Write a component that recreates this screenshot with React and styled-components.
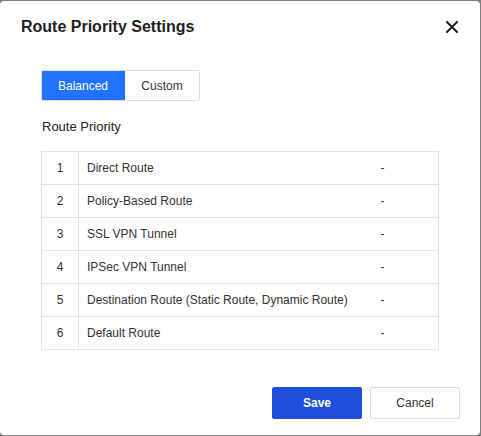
import React, { useState } from "react";
import styled, { createGlobalStyle } from "styled-components";

const GlobalStyle = createGlobalStyle`
  html, body {
    margin: 0;
    padding: 0;
    background: #7f7f7f;
    font-family: "Liberation Sans", Arial, sans-serif;
  }
  * { box-sizing: border-box; }
`;

const Dialog = styled.div`
  margin-top: 1px;
  width: 480px;
  height: 434px;
  background: #fff;
  border-radius: 4px;
  display: flex;
  flex-direction: column;
`;

const Header = styled.div`
  display: flex;
  align-items: center;
  justify-content: space-between;
  padding: 14px 21px 0 21px;
  height: 38px;
`;

const Title = styled.h2`
  margin: 0;
  font-size: 16px;
  line-height: 24px;
  font-weight: 700;
  color: #1f1f1f;
`;

const CloseButton = styled.button`
  border: 0;
  background: none;
  padding: 0;
  width: 14px;
  height: 14px;
  display: flex;
  align-items: center;
  justify-content: center;
  cursor: pointer;
`;

const Body = styled.div`
  padding: 31px 41px 0 41px;
  display: flex;
  flex-direction: column;
  align-items: flex-start;
`;

const Segmented = styled.div`
  display: flex;
  height: 31px;
  border: 1px solid #dcdcdc;
  border-radius: 2px;
  overflow: hidden;
`;

const SegmentButton = styled.button`
  width: ${(p) => p.$width}px;
  border: 0;
  margin: ${(p) => (p.$active ? "-1px 0 -1px -1px" : "0")};
  height: ${(p) => (p.$active ? "31px" : "auto")};
  background: ${(p) => (p.$active ? "#2172ff" : "#fff")};
  color: ${(p) => (p.$active ? "#fff" : "#333")};
  font-family: inherit;
  font-size: 12px;
  cursor: pointer;
`;

const SectionLabel = styled.div`
  margin-top: 17px;
  padding-left: 1px;
  font-size: 13px;
  line-height: 18px;
  color: #222;
`;

const Table = styled.table`
  margin-top: 15px;
  width: 398px;
  border-collapse: collapse;
  border: 1px solid #e3e5ec;
  font-size: 12px;
  color: #333;
`;

const Row = styled.tr`
  height: 33px;
  border-bottom: 1px solid #e3e5ec;
`;

const IndexCell = styled.td`
  width: 37px;
  text-align: center;
  border-right: 1px solid #e3e5ec;
  padding: 0;
`;

const NameCell = styled.td`
  width: 294px;
  padding: 0 8px;
`;

const ValueCell = styled.td`
  padding: 0 8px;
`;

const Footer = styled.div`
  margin-top: auto;
  padding: 0 20px 16px 0;
  display: flex;
  justify-content: flex-end;
  gap: 8px;
`;

const FooterButton = styled.button`
  width: 90px;
  height: 32px;
  border-radius: 2px;
  font-family: inherit;
  font-size: 12px;
  font-weight: ${(p) => (p.$primary ? 700 : 400)};
  border: 1px solid ${(p) => (p.$primary ? "#1f4fd9" : "#dcdcdc")};
  background: ${(p) => (p.$primary ? "#1f4fd9" : "#fff")};
  color: ${(p) => (p.$primary ? "#fff" : "#333")};
  cursor: pointer;
`;

const routes = [
  "Direct Route",
  "Policy-Based Route",
  "SSL VPN Tunnel",
  "IPSec VPN Tunnel",
  "Destination Route (Static Route, Dynamic Route)",
  "Default Route",
];

const App = () => {
  const [mode, setMode] = useState("balanced");

  return (
    <>
      <GlobalStyle />
      <Dialog>
        <Header>
          <Title>Route Priority Settings</Title>
          <CloseButton aria-label="Close">
            <svg width="12" height="12" viewBox="0 0 12 12">
              <path
                d="M1 1L11 11M11 1L1 11"
                stroke="#1f1f1f"
                strokeWidth="2"
                strokeLinecap="square"
              />
            </svg>
          </CloseButton>
        </Header>
        <Body>
          <Segmented>
            <SegmentButton
              $width={84}
              $active={mode === "balanced"}
              onClick={() => setMode("balanced")}
            >
              Balanced
            </SegmentButton>
            <SegmentButton
              $width={74}
              $active={mode === "custom"}
              onClick={() => setMode("custom")}
            >
              Custom
            </SegmentButton>
          </Segmented>
          <SectionLabel>Route Priority</SectionLabel>
          <Table>
            <tbody>
              {routes.map((r, i) => (
                <Row key={r}>
                  <IndexCell>{i + 1}</IndexCell>
                  <NameCell>{r}</NameCell>
                  <ValueCell>-</ValueCell>
                </Row>
              ))}
            </tbody>
          </Table>
        </Body>
        <Footer>
          <FooterButton $primary>Save</FooterButton>
          <FooterButton>Cancel</FooterButton>
        </Footer>
      </Dialog>
    </>
  );
};

export default App;
